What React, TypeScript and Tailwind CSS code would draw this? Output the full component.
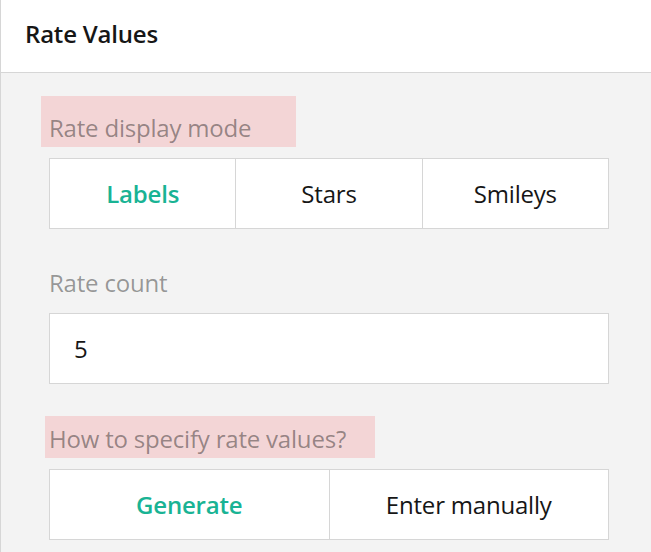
import React from "react";

const font = "font-['Open_Sans','Noto_Sans',sans-serif] tracking-[-0.2px]";

function Segmented({ items, active }: { items: string[]; active: number }) {
  return (
    <div className="flex h-[71px] border border-[#d6d6d6] bg-white">
      {items.map((it, i) => (
        <div
          key={it}
          className={
            "flex flex-1 items-center justify-center text-[24px] leading-[32px] " +
            (i < items.length - 1 ? "border-r border-[#d6d6d6] " : "") +
            (i === active ? "font-semibold text-[#19b394]" : "text-[#161616]")
          }
        >
          {it}
        </div>
      ))}
    </div>
  );
}

export default function App() {
  return (
    <div className={"w-[651px] h-[552px] overflow-hidden bg-[#f3f3f3] border-l border-[#d6d6d6] " + font}>
      <div className="h-[73px] bg-white border-b border-[#d6d6d6] pl-[24px] pt-[18px]">
        <div className="text-[24px] leading-[32px] font-semibold text-[#161616]">Rate Values</div>
      </div>
      <div className="pl-[48px] pr-[42px]">
        <div className="mt-[23px] -ml-[8px] w-[255px] h-[51px] bg-[#f3d5d6] pl-[8px] pt-[16px]">
          <div className="text-[24px] leading-[32px] text-black/40">Rate display mode</div>
        </div>
        <div className="mt-[11px]">
          <Segmented items={["Labels", "Stars", "Smileys"]} active={0} />
        </div>
        <div className="mt-[38px] text-[24px] leading-[32px] text-black/40">Rate count</div>
        <div className="mt-[14px] flex h-[71px] items-center border border-[#d6d6d6] bg-white pl-[24px]">
          <span className="text-[24px] leading-[32px] text-[#161616]">5</span>
        </div>
        <div className="mt-[32px] -ml-[4px] w-[330px] h-[42px] bg-[#f3d5d6] pl-[4px] pt-[7px]">
          <div className="text-[24px] leading-[32px] text-black/40">How to specify rate values?</div>
        </div>
        <div className="mt-[11px]">
          <Segmented items={["Generate", "Enter manually"]} active={0} />
        </div>
      </div>
    </div>
  );
}
